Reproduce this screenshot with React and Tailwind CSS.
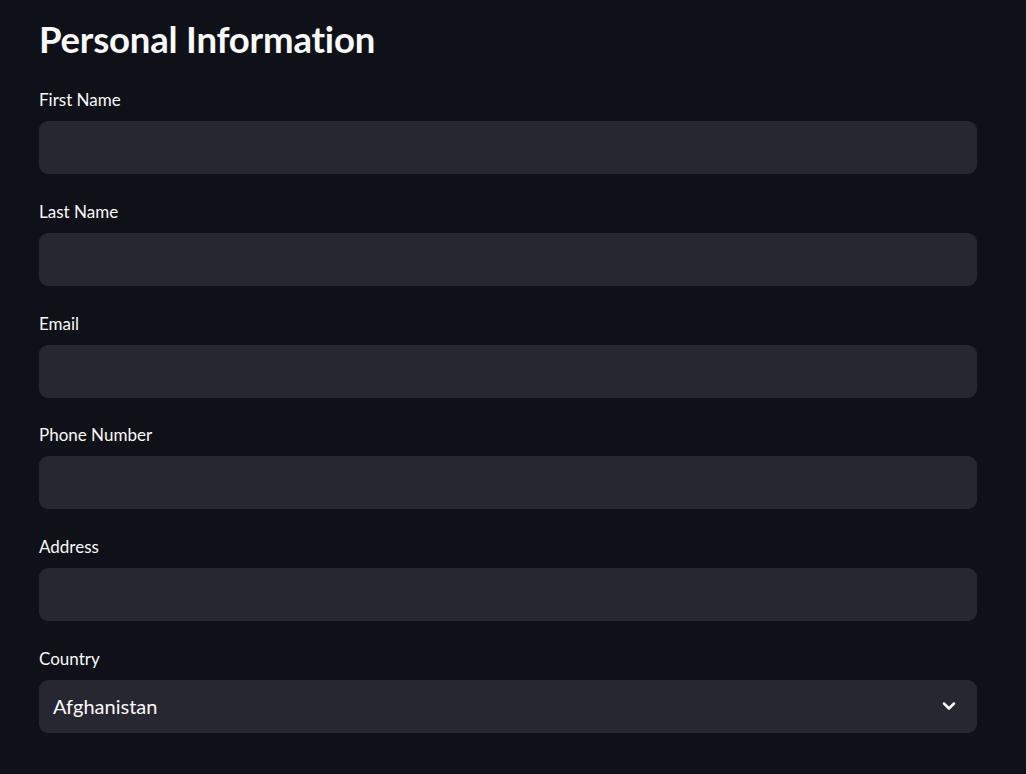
import { ChevronDown } from 'lucide-react';

const FIELDS = ['First Name', 'Last Name', 'Email', 'Phone Number', 'Address'];

const App = () => {
  return (
    <div className="min-h-screen w-full bg-[#0e1117] text-[#fafafa] font-['Lato',sans-serif]">
      <div className="px-[39px] pr-[49px] pt-[15px]">
        <h1 className="text-[36.5px] font-bold leading-[48px] tracking-[-0.2px]">Personal Information</h1>

        <div className="mt-[25px] flex flex-col gap-[25.8px]">
          {FIELDS.map((label) => (
            <div key={label} className="flex flex-col">
              <label className="text-[17px] leading-[24px] mb-[9px]">{label}</label>
              <input
                type="text"
                className="h-[53px] w-full rounded-[9px] bg-[#262730] px-[14px] text-[20px] outline-none"
              />
            </div>
          ))}

          <div className="flex flex-col">
            <label className="text-[17px] leading-[24px] mb-[9px]">Country</label>
            <div className="flex h-[53px] w-full items-center justify-between rounded-[9px] bg-[#262730] pl-[14px] pr-[18px]">
              <span className="text-[20px]">Afghanistan</span>
              <ChevronDown size={20} strokeWidth={3} />
            </div>
          </div>
        </div>
      </div>
    </div>
  );
};

export default App;
